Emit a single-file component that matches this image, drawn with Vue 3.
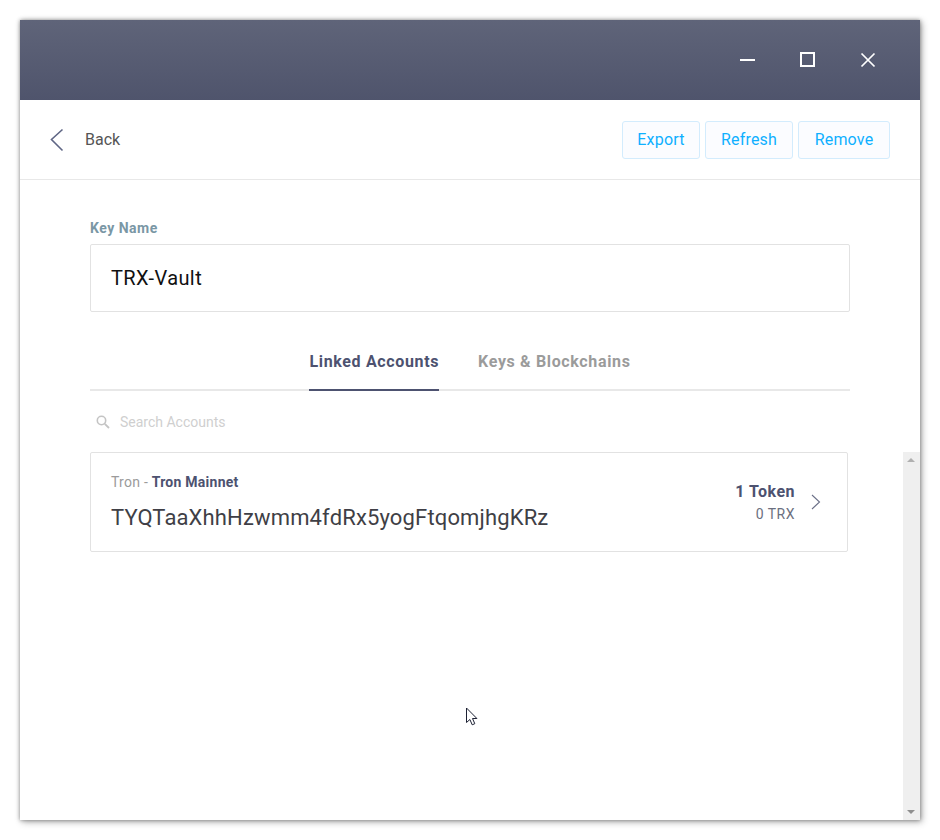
<script setup>
const actions = ['Export', 'Refresh', 'Remove']
</script>

<template>
  <div class="page">
    <div class="window">
      <div class="titlebar">
        <svg class="tb-icon" width="16" height="16" viewBox="0 0 16 16"><path d="M0 8h15" stroke="#fff" stroke-width="2" fill="none"/></svg>
        <svg class="tb-icon" width="16" height="16" viewBox="0 0 16 16"><rect x="1" y="1" width="13" height="13" stroke="#fff" stroke-width="2" fill="none"/></svg>
        <svg class="tb-icon last" width="16" height="16" viewBox="0 0 16 16"><path d="M1.5 1.5l13 13M14.5 1.5l-13 13" stroke="#fff" stroke-width="1.7" fill="none"/></svg>
      </div>
      <div class="toolbar">
        <div class="back">
          <svg width="14" height="24" viewBox="0 0 14 24"><path d="M12.5 1.5L1.5 11.5l11 11" stroke="#5f6685" stroke-width="1.6" fill="none"/></svg>
          <span>Back</span>
        </div>
        <div class="actions">
          <button v-for="a in actions" :key="a" class="btn">{{ a }}</button>
        </div>
      </div>
      <div class="content">
        <div class="form">
          <label class="label">Key Name</label>
          <div class="input">TRX-Vault</div>
          <div class="tabs">
            <div class="tab active">Linked Accounts</div>
            <div class="tab">Keys &amp; Blockchains</div>
          </div>
          <div class="search">
            <svg width="14" height="14" viewBox="0 0 14 14"><circle cx="5.5" cy="5.5" r="4.2" stroke="#c4c4c4" stroke-width="1.6" fill="none"/><path d="M8.8 8.8l4.2 4.2" stroke="#c4c4c4" stroke-width="1.8" fill="none"/></svg>
            <span>Search Accounts</span>
          </div>
        </div>
        <div class="scroller">
          <div class="card">
            <div class="card-left">
              <div class="network">Tron - <b>Tron Mainnet</b></div>
              <div class="address">TYQTaaXhhHzwmm4fdRx5yogFtqomjhgKRz</div>
            </div>
            <div class="card-right">
              <div class="tokens">1 Token</div>
              <div class="balance">0 TRX</div>
            </div>
            <svg class="chev" width="10" height="16" viewBox="0 0 10 16"><path d="M1 1l7.5 7L1 15" stroke="#6b7088" stroke-width="1.1" fill="none"/></svg>
          </div>
          <div class="scrollbar">
            <i class="arrow up"></i>
            <i class="arrow down"></i>
          </div>
        </div>
      </div>
      <svg class="cursor" width="14" height="20" viewBox="0 0 14 20"><path d="M1.5 1v14.5l3.4-3 2.3 5.3 2.6-1.1-2.3-5.2h4.4z" fill="#fff" stroke="#1c2033" stroke-width="1"/></svg>
    </div>
  </div>
</template>

<style scoped>
.page {
  width: 940px;
  height: 840px;
  padding: 20px;
  box-sizing: border-box;
  background: #fff;
  font-family: Roboto, "Liberation Sans", sans-serif;
}
.window {
  position: relative;
  width: 900px;
  height: 800px;
  background: #fff;
  display: flex;
  flex-direction: column;
  box-shadow: 0 0 4px rgba(0, 0, 0, .4), 2px 2px 7px rgba(0, 0, 0, .3);
}
.titlebar {
  height: 80px;
  flex: none;
  background: linear-gradient(#5f6479, #4f546c);
  display: flex;
  align-items: center;
  justify-content: flex-end;
  gap: 44px;
  padding-right: 44px;
}
.toolbar {
  height: 79px;
  flex: none;
  border-bottom: 1px solid #e8e8e8;
  display: flex;
  align-items: center;
  justify-content: space-between;
  padding: 0 30px;
}
.back {
  display: flex;
  align-items: center;
  gap: 21px;
  font-size: 16px;
  color: #555;
}
.actions {
  display: grid;
  grid-template-columns: 78px 88px 92px;
  gap: 5px;
}
.btn {
  height: 38px;
  padding: 0;
  background: #fbfcff;
  border: 1px solid #d3ecfd;
  border-radius: 3px;
  color: #0fb0ff;
  font: 16px Roboto, "Liberation Sans", sans-serif;
  letter-spacing: .2px;
}
.content {
  flex: 1;
  min-height: 0;
  display: flex;
  flex-direction: column;
}
.form {
  padding: 40px 70px 0;
}
.label {
  display: block;
  font-size: 14px;
  font-weight: 700;
  line-height: 17px;
  letter-spacing: .5px;
  color: #7a97a5;
}
.input {
  margin-top: 7px;
  height: 66px;
  line-height: 66px;
  border: 1px solid #e2e2e2;
  border-radius: 2px;
  padding: 0 20px;
  font-size: 20px;
  letter-spacing: .4px;
  color: #111;
}
.tabs {
  margin-top: 28px;
  height: 51px;
  box-sizing: border-box;
  border-bottom: 2px solid #e8e8e8;
  display: flex;
  justify-content: center;
  gap: 39px;
}
.tab {
  height: 51px;
  box-sizing: border-box;
  line-height: 44px;
  font-size: 16px;
  font-weight: 700;
  letter-spacing: .65px;
  color: #9b9b9b;
}
.tab.active {
  color: #4d5270;
  border-bottom: 2px solid #4d5270;
}
.search {
  height: 61px;
  display: flex;
  align-items: center;
  gap: 10px;
  padding-left: 6px;
  font-size: 14px;
  color: #cfcfcf;
}
.scroller {
  flex: 1;
  min-height: 0;
  display: flex;
  justify-content: space-between;
  padding-left: 70px;
  align-items: flex-start;
}
.card {
  width: 758px;
  height: 100px;
  box-sizing: border-box;
  border: 1px solid #e2e2e2;
  border-radius: 2px;
  display: flex;
  align-items: center;
  padding: 0 26px 0 20px;
}
.card-left {
  flex: 1;
  padding-top: 2px;
}
.network {
  font-size: 14px;
  color: #9b9b9b;
  line-height: 17px;
  letter-spacing: .25px;
}
.network b {
  color: #4d5270;
}
.address {
  margin-top: 13px;
  font-size: 22px;
  line-height: 28px;
  letter-spacing: .15px;
  color: #3f3f46;
}
.card-right {
  text-align: right;
  margin-right: 16px;
}
.tokens {
  font-size: 16px;
  font-weight: 700;
  line-height: 20px;
  letter-spacing: .5px;
  color: #4d5270;
}
.balance {
  margin-top: 4px;
  font-size: 14px;
  line-height: 17px;
  letter-spacing: .5px;
  color: #6b6f80;
}
.scrollbar {
  position: relative;
  width: 17px;
  height: 100%;
  background: #efefef;
}
.arrow {
  position: absolute;
  left: 4px;
  width: 0;
  height: 0;
  border-left: 4px solid transparent;
  border-right: 4px solid transparent;
}
.arrow.up {
  top: 6px;
  border-bottom: 4px solid #b0b0b0;
}
.arrow.down {
  bottom: 6px;
  border-top: 4px solid #8f8f8f;
}
.cursor {
  position: absolute;
  left: 445px;
  top: 687px;
}
</style>
